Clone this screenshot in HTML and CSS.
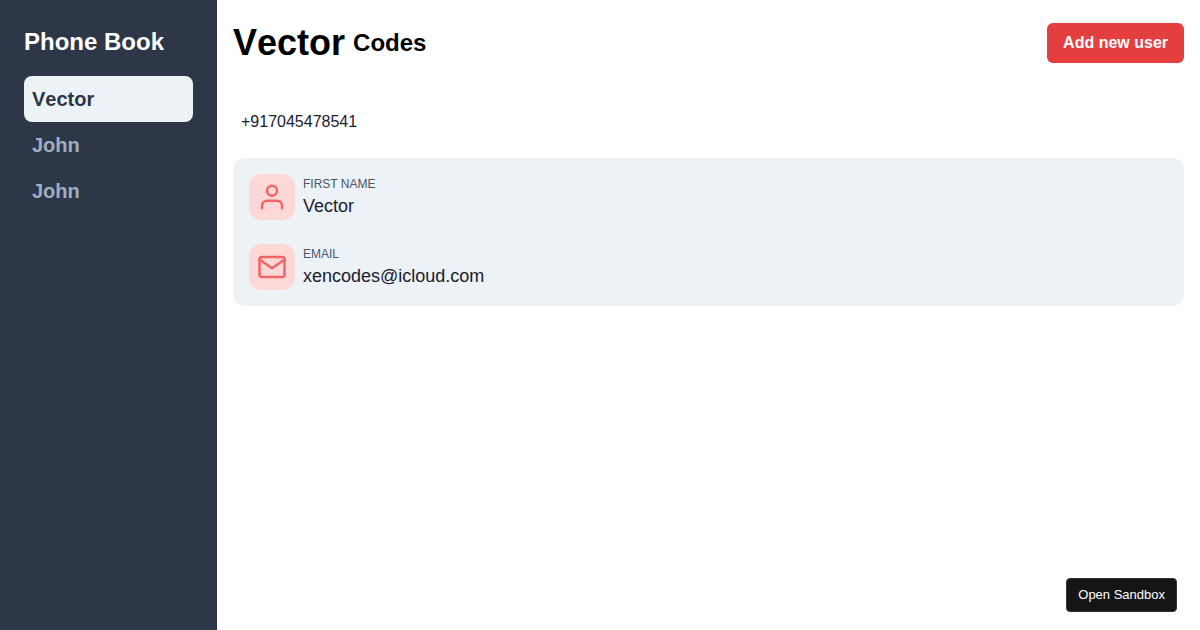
FILE: index.html
```html
<!DOCTYPE html>
<html lang="en">
<head>
    <meta charset="UTF-8">
    <meta name="viewport" content="width=device-width, initial-scale=1">
    <title>Phone Book</title>
    <link rel="stylesheet" href="styles.css">
</head>
<body>
    <div class="app">
        <aside class="sidebar">
            <h2 class="brand">Phone Book</h2>
            <nav class="contacts">
                <a class="contact active" href="#vector">Vector</a>
                <a class="contact" href="#john-1">John</a>
                <a class="contact" href="#john-2">John</a>
            </nav>
        </aside>
        <main class="main">
            <header class="header">
                <h1 class="name">Vector <span class="last-name">Codes</span></h1>
                <button class="add-btn" type="button">Add new user</button>
            </header>
            <p class="phone">+917045478541</p>
            <dl class="card">
                <div class="row">
                    <svg class="icon" viewBox="0 0 24 24" aria-hidden="true">
                        <path d="M20 21v-2a4 4 0 0 0-4-4H8a4 4 0 0 0-4 4v2"/>
                        <circle cx="12" cy="7" r="4"/>
                    </svg>
                    <div class="field">
                        <dt class="label">First name</dt>
                        <dd class="value">Vector</dd>
                    </div>
                </div>
                <div class="row">
                    <svg class="icon" viewBox="0 0 24 24" aria-hidden="true">
                        <path d="M4 4h16c1.1 0 2 .9 2 2v12c0 1.1-.9 2-2 2H4c-1.1 0-2-.9-2-2V6c0-1.1.9-2 2-2z"/>
                        <polyline points="22,6 12,13 2,6"/>
                    </svg>
                    <div class="field">
                        <dt class="label">Email</dt>
                        <dd class="value">xencodes@icloud.com</dd>
                    </div>
                </div>
            </dl>
        </main>
    </div>
    <button class="sandbox-btn" type="button">Open Sandbox</button>
</body>
</html>
```

FILE: styles.css
```css
* {
    margin: 0;
    padding: 0;
    box-sizing: border-box;
}

body {
    font-family: "Liberation Sans", Arial, sans-serif;
    font-size: 16px;
    line-height: 1.5;
    color: #1a202c;
    background: #fff;
}

button {
    font-family: inherit;
    cursor: pointer;
}

.app {
    display: flex;
    min-height: 100vh;
}

/* sidebar */
.sidebar {
    flex: 0 0 217px;
    padding: 24px;
    background: #2d3748;
}

.brand {
    margin-bottom: 16px;
    font-size: 24px;
    color: #fff;
}

.contact {
    display: block;
    padding: 8px;
    border-radius: 8px;
    font-size: 20px;
    font-weight: bold;
    font-kerning: none;
    color: #a0aec0;
    text-decoration: none;
}

.contact.active {
    background: #edf2f7;
    color: #2d3748;
}

/* contact details */
.main {
    flex: 1;
    min-width: 0;
    padding: 16px;
}

.header {
    display: flex;
    align-items: center;
    justify-content: space-between;
    margin-bottom: 32px;
    color: #000;
}

.name {
    display: flex;
    align-items: center;
    gap: 8px;
    font-size: 36px;
    font-kerning: none;
}

.last-name {
    font-size: 24px;
}

.add-btn {
    padding: 8px 16px;
    border: none;
    border-radius: 6px;
    background: #e53e3e;
    color: #fff;
    font-size: 16px;
    font-weight: bold;
    line-height: 24px;
}

.phone {
    margin-bottom: 16px;
    padding: 8px;
}

.card {
    display: flex;
    flex-direction: column;
    gap: 24px;
    padding: 16px;
    border-radius: 12px;
    background: #edf2f7;
}

.row {
    display: flex;
    align-items: center;
    gap: 8px;
}

.icon {
    width: 46px;
    height: 46px;
    padding: 8px;
    border-radius: 12px;
    background: #fed7d7;
    fill: none;
    stroke: #f56565;
    stroke-width: 2;
    stroke-linecap: round;
    stroke-linejoin: round;
}

.label {
    font-size: 12px;
    text-transform: uppercase;
    color: #4a5568;
}

.value {
    font-size: 18px;
}

/* floating button */
.sandbox-btn {
    position: fixed;
    right: 23px;
    bottom: 18px;
    padding: 8px 11px;
    border: 1px solid #343434;
    border-radius: 4px;
    background: #151515;
    color: #fff;
    font-size: 13px;
    line-height: 16px;
}
```
